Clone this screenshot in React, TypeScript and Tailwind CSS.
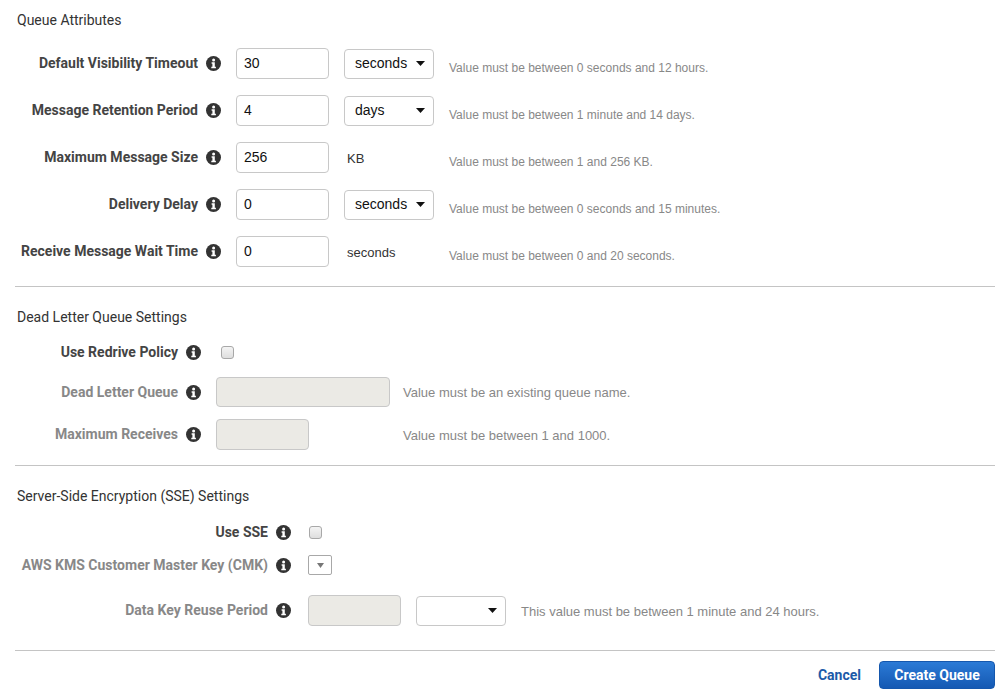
import React from 'react';

const ARIAL = { fontFamily: '"Liberation Sans", Arial, sans-serif' };

// Info badge shown next to each field label
const InfoIcon: React.FC = () => (
  <svg width="15" height="15" viewBox="0 0 15 15" className="shrink-0">
    <circle cx="7.5" cy="7.5" r="7.5" fill="#333" />
    <circle cx="7.6" cy="4" r="1.5" fill="#fff" />
    <path d="M5.6 6.2h3.2v4.6h1.1v1.5H5.3v-1.5h1.1V7.7h-0.8z" fill="#fff" />
  </svg>
);

const Caret: React.FC = () => (
  <svg width="9" height="5" viewBox="0 0 9 5">
    <path d="M0 0h9L4.5 5z" fill="#111" />
  </svg>
);

const TextInput: React.FC<{ value?: string; width: string; disabled?: boolean; height?: string }> = ({
  value,
  width,
  disabled,
  height = 'h-[31px]',
}) => (
  <div
    className={`${width} ${height} rounded-[4px] border border-[#c8c8c8] flex items-center pl-[7px] text-[14px] text-[#111] ${
      disabled ? 'bg-[#ebeae5]' : 'bg-white'
    }`}
    style={ARIAL}
  >
    {value}
  </div>
);

const Select: React.FC<{ value?: string; width: string }> = ({ value, width }) => (
  <div
    className={`${width} h-[30px] rounded-[4px] border border-[#c8c8c8] bg-white flex items-center justify-between pl-[10px] pr-[8px] text-[14px] text-[#111]`}
    style={ARIAL}
  >
    <span>{value}</span>
    <Caret />
  </div>
);

const Checkbox: React.FC = () => (
  <div className="w-[13px] h-[13px] rounded-[3px] border border-[#a8a8a8] bg-gradient-to-b from-[#f4f4f4] to-[#dedede]" />
);

const Label: React.FC<{ text: string; width: string; muted?: boolean }> = ({ text, width, muted }) => (
  <div className={`${width} flex items-center justify-end gap-[8px]`}>
    <span className={`text-[14px] font-bold whitespace-nowrap ${muted ? 'text-[#888]' : 'text-[#444]'}`}>{text}</span>
    <InfoIcon />
  </div>
);

const SectionTitle: React.FC<{ children: React.ReactNode }> = ({ children }) => (
  <div className="text-[14px] leading-[20px] text-[#333] pl-[2px]">{children}</div>
);

const Divider: React.FC = () => <div className="h-px bg-[#c4c4c4]" />;

const Help: React.FC<{ children: React.ReactNode; size?: string }> = ({ children, size = 'text-[12px]' }) => (
  <span className={`${size} text-[#888] whitespace-nowrap`} style={ARIAL}>
    {children}
  </span>
);

const queueRows = [
  { label: 'Default Visibility Timeout', value: '30', unit: 'seconds', select: true, help: 'Value must be between 0 seconds and 12 hours.' },
  { label: 'Message Retention Period', value: '4', unit: 'days', select: true, help: 'Value must be between 1 minute and 14 days.' },
  { label: 'Maximum Message Size', value: '256', unit: 'KB', select: false, help: 'Value must be between 1 and 256 KB.' },
  { label: 'Delivery Delay', value: '0', unit: 'seconds', select: true, help: 'Value must be between 0 seconds and 15 minutes.' },
  { label: 'Receive Message Wait Time', value: '0', unit: 'seconds', select: false, help: 'Value must be between 0 and 20 seconds.' },
];

export default function App() {
  return (
    <div className="w-[1005px] h-[695px] bg-white pl-[15px] pr-[10px] pt-[10px]" style={{ fontFamily: 'Roboto, "Liberation Sans", sans-serif' }}>
      {/* Queue Attributes */}
      <SectionTitle>Queue Attributes</SectionTitle>
      <div className="flex flex-col gap-[16px] mt-[18px]">
        {queueRows.map((row) => (
          <div key={row.label} className="flex items-center h-[31px]">
            <Label text={row.label} width="w-[206px]" />
            <div className="ml-[15px]">
              <TextInput value={row.value} width="w-[93px]" />
            </div>
            <div className="ml-[15px] w-[90px]" style={ARIAL}>
              {row.select ? (
                <Select value={row.unit} width="w-[90px]" />
              ) : (
                <span className="pl-[3px] text-[13px] text-[#333]">{row.unit}</span>
              )}
            </div>
            <div className="ml-[15px] pt-[7px]">
              <Help>{row.help}</Help>
            </div>
          </div>
        ))}
      </div>

      <div className="mt-[19px]">
        <Divider />
      </div>

      {/* Dead Letter Queue Settings */}
      <div className="mt-[20px]">
        <SectionTitle>Dead Letter Queue Settings</SectionTitle>
      </div>
      <div className="flex flex-col mt-[15px]">
        <div className="flex items-center h-[20px]">
          <Label text="Use Redrive Policy" width="w-[186px]" />
          <div className="ml-[20px]">
            <Checkbox />
          </div>
        </div>
        <div className="flex items-center h-[30px] mt-[15px]">
          <Label text="Dead Letter Queue" width="w-[186px]" muted />
          <div className="ml-[15px] w-[174px]">
            <TextInput width="w-[174px]" height="h-[30px]" disabled />
          </div>
          <div className="ml-[13px]">
            <Help size="text-[13px]">Value must be an existing queue name.</Help>
          </div>
        </div>
        <div className="flex items-center h-[31px] mt-[12px]">
          <Label text="Maximum Receives" width="w-[186px]" muted />
          <div className="ml-[15px] w-[174px]">
            <TextInput width="w-[93px]" disabled />
          </div>
          <div className="ml-[13px]">
            <Help size="text-[13px]">Value must be between 1 and 1000.</Help>
          </div>
        </div>
      </div>

      <div className="mt-[15px]">
        <Divider />
      </div>

      {/* Server-Side Encryption */}
      <div className="mt-[20px]">
        <SectionTitle>Server-Side Encryption (SSE) Settings</SectionTitle>
      </div>
      <div className="flex flex-col mt-[16px]">
        <div className="flex items-center h-[20px]">
          <Label text="Use SSE" width="w-[276px]" />
          <div className="ml-[18px]">
            <Checkbox />
          </div>
        </div>
        <div className="flex items-center h-[22px] mt-[12px]">
          <Label text="AWS KMS Customer Master Key (CMK)" width="w-[276px]" muted />
          <div className="ml-[17px] w-[24px] h-[20px] border border-[#a8a8a8] rounded-[2px] bg-white flex items-center justify-center">
            <svg width="7" height="5" viewBox="0 0 7 5">
              <path d="M0 0h7L3.5 5z" fill="#777" />
            </svg>
          </div>
        </div>
        <div className="flex items-center h-[31px] mt-[19px]">
          <Label text="Data Key Reuse Period" width="w-[276px]" muted />
          <div className="ml-[17px]">
            <TextInput width="w-[93px]" disabled />
          </div>
          <div className="ml-[15px]">
            <Select width="w-[90px]" />
          </div>
          <div className="ml-[15px]">
            <Help size="text-[13px]">This value must be between 1 minute and 24 hours.</Help>
          </div>
        </div>
      </div>

      <div className="mt-[24px]">
        <Divider />
      </div>

      {/* Footer actions */}
      <div className="flex justify-end items-center gap-[18px] mt-[10px]">
        <span className="text-[14px] font-bold text-[#1c5aa8]">Cancel</span>
        <div className="w-[116px] h-[28px] rounded-[4px] bg-gradient-to-b from-[#2b7ad6] to-[#1559b3] border border-[#1557ad] flex items-center justify-center text-[14px] font-bold text-white">
          Create Queue
        </div>
      </div>
    </div>
  );
}
